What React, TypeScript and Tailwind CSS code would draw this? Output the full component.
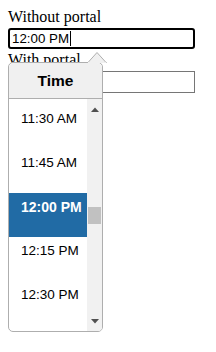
import React from "react"

const times = ["11:30 AM", "11:45 AM", "12:00 PM", "12:15 PM", "12:30 PM"]

function TimePopper() {
  return (
    <div className="absolute left-[8px] top-[62px] w-[95px]">
      {/* arrow */}
      <svg className="absolute left-[79px] top-[-11px]" width="22" height="12" viewBox="0 0 22 12">
        <path d="M0.5 12 L10 1.5 L19.5 12 Z" fill="#f0f0f0" stroke="#aeaeae" strokeWidth="1" />
        <rect x="1" y="11" width="18" height="2" fill="#f0f0f0" />
      </svg>
      <div className="h-[270px] overflow-hidden rounded-[5px] border border-[#aeaeae] bg-white flex flex-col">
        <div className="h-[36px] shrink-0 bg-[#f0f0f0] border-b border-[#aeaeae] flex items-center justify-center rounded-t-[5px] font-['Liberation_Sans',Arial,sans-serif] text-[15.5px] font-bold text-black">
          Time
        </div>
        <div className="flex flex-1 min-h-0">
          <div className="w-[78px] flex flex-col font-['Liberation_Sans',Arial,sans-serif]">
            <div className="h-[6px] shrink-0" />
            {times.map((t) => {
              const selected = t === "12:00 PM"
              return (
                <div
                  key={t}
                  className={
                    selected
                      ? "h-[44px] shrink-0 pt-[6px] pl-[12px] leading-[16px] whitespace-nowrap bg-[#216ba5] text-white font-bold text-[14px]"
                      : "h-[44px] shrink-0 pt-[6px] pl-[12px] leading-[16px] whitespace-nowrap text-black text-[13.5px]"
                  }
                >
                  {t}
                </div>
              )
            })}
          </div>
          <div className="w-[15px] bg-[#f1f1f1] flex flex-col items-center">
            <svg className="mt-[8px]" width="8" height="5" viewBox="0 0 8 5">
              <path d="M0 5 L4 0.5 L8 5 Z" fill="#505050" />
            </svg>
            <div className="mt-[95px] h-[17px] w-[13px] bg-[#c1c1c1]" />
            <div className="flex-1" />
            <svg className="mb-[7px]" width="8" height="5" viewBox="0 0 8 5">
              <path d="M0 0 L4 4.5 L8 0 Z" fill="#505050" />
            </svg>
          </div>
        </div>
      </div>
    </div>
  )
}

export default function App() {
  return (
    <div className="relative w-[216px] h-[352px] bg-white p-2 font-['Liberation_Serif','Times_New_Roman',serif] text-[16px] text-black">
      <div className="leading-[18px]">Without portal</div>
      <div className="mt-[2px] h-[21px] w-[187px] rounded-[3px] border-2 border-black flex items-center pl-[2px] font-['Liberation_Sans',Arial,sans-serif] text-[13.33px]">
        12:00 PM<span className="ml-[1px] h-[15px] w-px bg-black" />
      </div>
      <div className="mt-[2px] leading-[18px]">With portal</div>
      <div className="mt-[2px] h-[22px] w-[187px] border border-[#767676] bg-white" />
      <TimePopper />
    </div>
  )
}
